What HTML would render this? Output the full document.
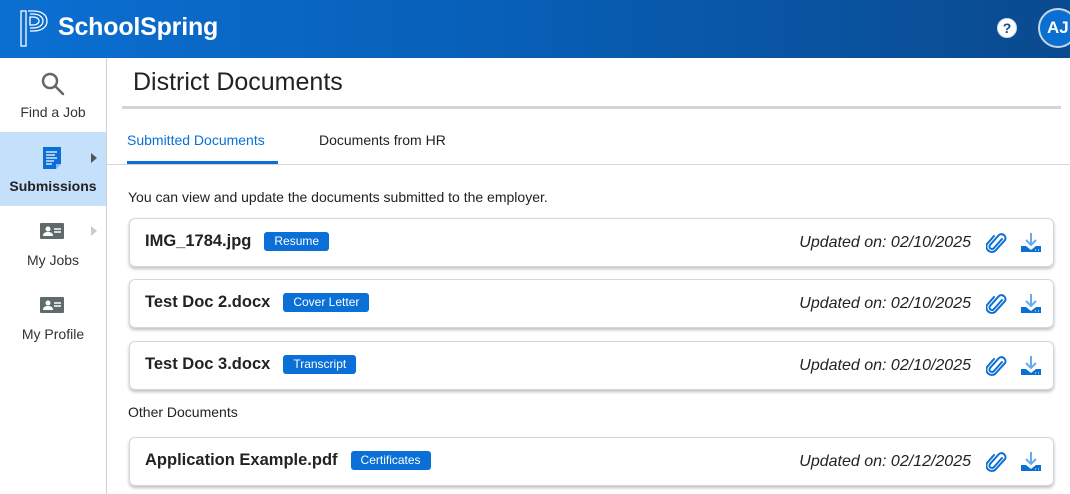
<!DOCTYPE html>
<html><head><style>
*{box-sizing:border-box;margin:0;padding:0}
body{width:1070px;height:494px;overflow:hidden;background:#fff;font-family:"Liberation Sans","DejaVu Sans",sans-serif;color:#222;position:relative}
.hdr{position:absolute;left:0;top:0;width:1070px;height:58px;background:linear-gradient(90deg,#0b6fd2 0%,#0860b8 45%,#0a4a8f 100%)}
.logo{position:absolute;left:58px;top:13px;color:#fff;font-size:25px;font-weight:bold;letter-spacing:-0.2px}
.side{position:absolute;left:0;top:58px;width:107px;height:436px;border-right:1px solid #d0d0d0;background:#fff}
.nav{position:absolute;left:0;width:106px;height:74px;text-align:center;font-size:14px;color:#333}
.nav span{position:absolute;left:0;right:0}
.title{position:absolute;left:133px;top:68px;font-size:25px;color:#222}
.tl{position:absolute;left:122px;top:106px;width:939px;height:3px;background:#d4d4d4}
.tab{position:absolute;top:132px;font-size:14px}
.card{position:absolute;left:129px;width:925px;height:49px;border:1px solid #d6d6d6;border-radius:6px;box-shadow:0 2px 3px rgba(0,0,0,.25);background:#fff}
.fn{position:absolute;left:15px;top:13px;font-size:16.5px;font-weight:bold;color:#222}
.badge{display:inline-block;background:#0a6fd6;color:#fff;font-size:12px;font-weight:normal;border-radius:3px;padding:2px 10px 3px;margin-left:13px;vertical-align:1px}
.up{position:absolute;right:82px;top:15px;font-size:16px;font-style:italic;color:#222}
.ic{position:absolute;top:12px}
</style></head><body>
<div class="hdr">
<svg style="position:absolute;left:20px;top:10px" width="30" height="38" viewBox="0 0 30 38" fill="none" stroke="#fff" stroke-width="1.3"><rect x="1" y="1" width="5" height="35"/><path d="M8 1h5c9 0 14 4 14 10s-5 10-14 10h-3"/><path d="M10 4h3c6 0 10 3 10 7s-4 7-10 7h-3"/><path d="M10 7h3c4 0 6 2 6 4s-2 4-6 4h-3z"/></svg>
<div class="logo">SchoolSpring</div>
<div style="position:absolute;left:997px;top:18px;width:20px;height:20px;border-radius:50%;background:#fff;border:1px solid #cde;color:#0a4a8f;font-weight:bold;font-size:14px;text-align:center;line-height:19px">?</div>
<div style="position:absolute;left:1038px;top:8px;width:40px;height:40px;border-radius:50%;background:#0b6fd2;border:2px solid #c8d6e8;color:#fff;font-weight:bold;font-size:17px;line-height:36px;padding-left:7px">AJ</div>
</div>
<div class="side">
<div class="nav" style="top:0"><svg style="position:absolute;left:40px;top:13px" width="26" height="26" viewBox="0 0 26 26" fill="none" stroke="#666" stroke-width="2.5"><circle cx="10" cy="10" r="7"/><path d="M15 15l8 8" stroke-linecap="round"/></svg><span style="top:46px">Find a Job</span></div>
<div class="nav" style="top:74px;background:#c4e0fb"><svg style="position:absolute;left:42px;top:14px" width="20" height="24" viewBox="0 0 20 24"><path d="M1 1h18v17l-5 5H1z" fill="#0a6fd6"/><path d="M4 6h11M4 9h9M4 12h11M4 15h8M4 18h6" stroke="#fff" stroke-width="1.3"/><path d="M14 23v-5h5" fill="#8ab8ea"/></svg><svg style="position:absolute;left:91px;top:21px" width="6" height="10"><path d="M0 0l6 5-6 5z" fill="#555"/></svg><span style="top:46px;font-weight:bold;color:#222">Submissions</span></div>
<div class="nav" style="top:148px"><svg style="position:absolute;left:40px;top:17px" width="24" height="16" viewBox="0 0 24 16"><rect width="24" height="16" rx="1" fill="#5f6b6b"/><circle cx="8" cy="6" r="2.5" fill="#fff"/><path d="M3 13c0-3 2-4 5-4s5 1 5 4z" fill="#fff"/><path d="M14 6h7M14 9h7" stroke="#fff" stroke-width="1.4"/></svg><svg style="position:absolute;left:91px;top:20px" width="6" height="10"><path d="M0 0l6 5-6 5z" fill="#ccc"/></svg><span style="top:46px">My Jobs</span></div>
<div class="nav" style="top:222px"><svg style="position:absolute;left:40px;top:17px" width="24" height="16" viewBox="0 0 24 16"><rect width="24" height="16" rx="1" fill="#5f6b6b"/><circle cx="8" cy="6" r="2.5" fill="#fff"/><path d="M3 13c0-3 2-4 5-4s5 1 5 4z" fill="#fff"/><path d="M14 6h7M14 9h7" stroke="#fff" stroke-width="1.4"/></svg><span style="top:46px">My Profile</span></div>
</div>
<div class="title">District Documents</div>
<div class="tl"></div>
<div class="tab" style="left:127px;color:#0a6fd6">Submitted Documents</div>
<div style="position:absolute;left:127px;top:161px;width:151px;height:3px;background:#0a6fd6"></div>
<div class="tab" style="left:319px;color:#222">Documents from HR</div>
<div style="position:absolute;left:107px;top:164px;width:963px;height:1px;background:#d6d6d6"></div>
<div style="position:absolute;left:128px;top:189px;font-size:14px">You can view and update the documents submitted to the employer.</div>
<div style="position:absolute;left:128px;top:404px;font-size:14px">Other Documents</div>

<div class="card" style="top:218px"><div class="fn">IMG_1784.jpg<span class="badge">Resume</span></div><div class="up">Updated on: 02/10/2025</div>
<svg class="ic" style="left:856px" width="22" height="24" viewBox="0 0 22 24" fill="none" stroke="#0a6fd6" stroke-width="2" stroke-linecap="round"><path d="M16 8l-8 9a2.5 2.5 0 0 1-4-3l9-10a4 4 0 0 1 6 5l-10 11a5.5 5.5 0 0 1-8-7l7-8"/></svg>
<svg class="ic" style="left:890px" width="22" height="24" viewBox="0 0 22 24"><path d="M11 2v11M6 9l5 5 5-5" stroke="#6aaae8" stroke-width="2" fill="none"/><path d="M1 15h5l5 4 5-4h5v6H1z" fill="#0a6fd6"/><path d="M15 19h1M18 19h1" stroke="#fff"/></svg></div>

<div class="card" style="top:279px"><div class="fn">Test Doc 2.docx<span class="badge">Cover Letter</span></div><div class="up">Updated on: 02/10/2025</div>
<svg class="ic" style="left:856px" width="22" height="24" viewBox="0 0 22 24" fill="none" stroke="#0a6fd6" stroke-width="2" stroke-linecap="round"><path d="M16 8l-8 9a2.5 2.5 0 0 1-4-3l9-10a4 4 0 0 1 6 5l-10 11a5.5 5.5 0 0 1-8-7l7-8"/></svg>
<svg class="ic" style="left:890px" width="22" height="24" viewBox="0 0 22 24"><path d="M11 2v11M6 9l5 5 5-5" stroke="#6aaae8" stroke-width="2" fill="none"/><path d="M1 15h5l5 4 5-4h5v6H1z" fill="#0a6fd6"/><path d="M15 19h1M18 19h1" stroke="#fff"/></svg></div>

<div class="card" style="top:341px"><div class="fn">Test Doc 3.docx<span class="badge">Transcript</span></div><div class="up">Updated on: 02/10/2025</div>
<svg class="ic" style="left:856px" width="22" height="24" viewBox="0 0 22 24" fill="none" stroke="#0a6fd6" stroke-width="2" stroke-linecap="round"><path d="M16 8l-8 9a2.5 2.5 0 0 1-4-3l9-10a4 4 0 0 1 6 5l-10 11a5.5 5.5 0 0 1-8-7l7-8"/></svg>
<svg class="ic" style="left:890px" width="22" height="24" viewBox="0 0 22 24"><path d="M11 2v11M6 9l5 5 5-5" stroke="#6aaae8" stroke-width="2" fill="none"/><path d="M1 15h5l5 4 5-4h5v6H1z" fill="#0a6fd6"/><path d="M15 19h1M18 19h1" stroke="#fff"/></svg></div>

<div class="card" style="top:437px"><div class="fn">Application Example.pdf<span class="badge">Certificates</span></div><div class="up">Updated on: 02/12/2025</div>
<svg class="ic" style="left:856px" width="22" height="24" viewBox="0 0 22 24" fill="none" stroke="#0a6fd6" stroke-width="2" stroke-linecap="round"><path d="M16 8l-8 9a2.5 2.5 0 0 1-4-3l9-10a4 4 0 0 1 6 5l-10 11a5.5 5.5 0 0 1-8-7l7-8"/></svg>
<svg class="ic" style="left:890px" width="22" height="24" viewBox="0 0 22 24"><path d="M11 2v11M6 9l5 5 5-5" stroke="#6aaae8" stroke-width="2" fill="none"/><path d="M1 15h5l5 4 5-4h5v6H1z" fill="#0a6fd6"/><path d="M15 19h1M18 19h1" stroke="#fff"/></svg></div>
</body></html>
